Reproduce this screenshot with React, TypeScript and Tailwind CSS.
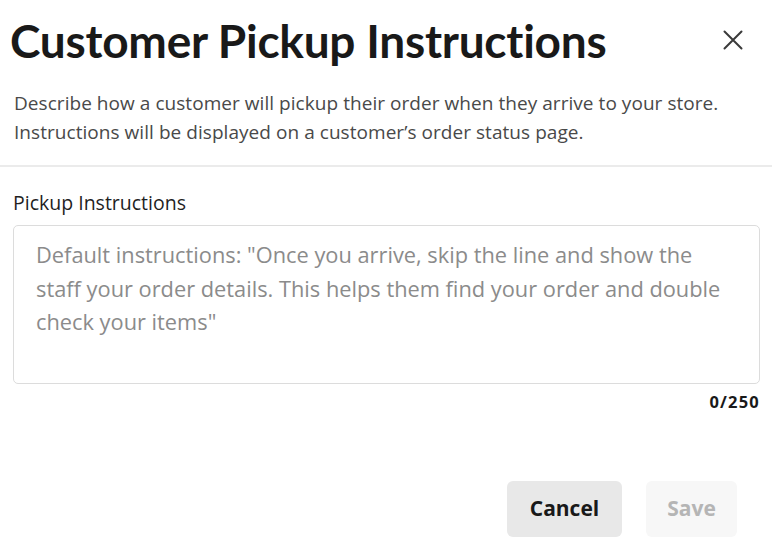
import React from "react";

export default function App() {
  return (
    <div className="w-[772px] h-[554px] bg-white overflow-hidden font-['Open_Sans',sans-serif]">
      {/* Header */}
      <div className="flex items-center justify-between pl-[10px] pr-[29px] pt-[14px]">
        <h1 className="font-['Lato',sans-serif] text-[46px] leading-[54px] font-bold text-[#191919] tracking-[-0.25px]">
          Customer Pickup Instructions
        </h1>
        <button className="w-[20px] h-[20px] flex items-center justify-center mt-[-2px]">
          <svg width="20" height="20" viewBox="0 0 20 20" fill="none" stroke="#3a3a3a" strokeWidth="2" strokeLinecap="round">
            <path d="M1.5 1.5l17 17M18.5 1.5l-17 17" />
          </svg>
        </button>
      </div>

      <p className="px-[14px] mt-[21px] text-[19px] leading-[29px] text-[#494949] tracking-[0.05px]">
        Describe how a customer will pickup their order when they arrive to your store.
        <br />
        Instructions will be displayed on a customer’s order status page.
      </p>

      <div className="mt-[18px] h-[2px] bg-[#ebebeb]" />

      {/* Body */}
      <div className="pl-[13px] pr-[12px]">
        <label className="block mt-[23px] text-[19.5px] leading-[26px] text-[#1f1f1f]">
          Pickup Instructions
        </label>
        <textarea
          className="mt-[9px] block w-full h-[159px] border border-[#dcdcdc] rounded-[5px] px-[22px] py-[12px] text-[21.8px] leading-[33.5px] text-[#191919] placeholder:text-[#8b8b8b] resize-none outline-none tracking-[0px]"
          placeholder={'Default instructions: "Once you arrive, skip the line and show the\nstaff your order details. This helps them find your order and double\ncheck your items"'}
        />
        <div className="mt-[7px] text-right text-[16.5px] leading-[22px] font-bold text-[#191919] tracking-[1.2px]">0/250</div>
      </div>

      {/* Footer */}
      <div className="flex justify-end gap-[24px] pr-[35px] mt-[68px]">
        <button className="w-[115px] h-[56px] rounded-[6px] bg-[#e8e8e8] text-[21px] font-bold text-[#191919]">
          Cancel
        </button>
        <button className="w-[91px] h-[56px] rounded-[6px] bg-[#f7f7f7] text-[21px] font-bold text-[#b5b5b5]" disabled>
          Save
        </button>
      </div>
    </div>
  );
}
